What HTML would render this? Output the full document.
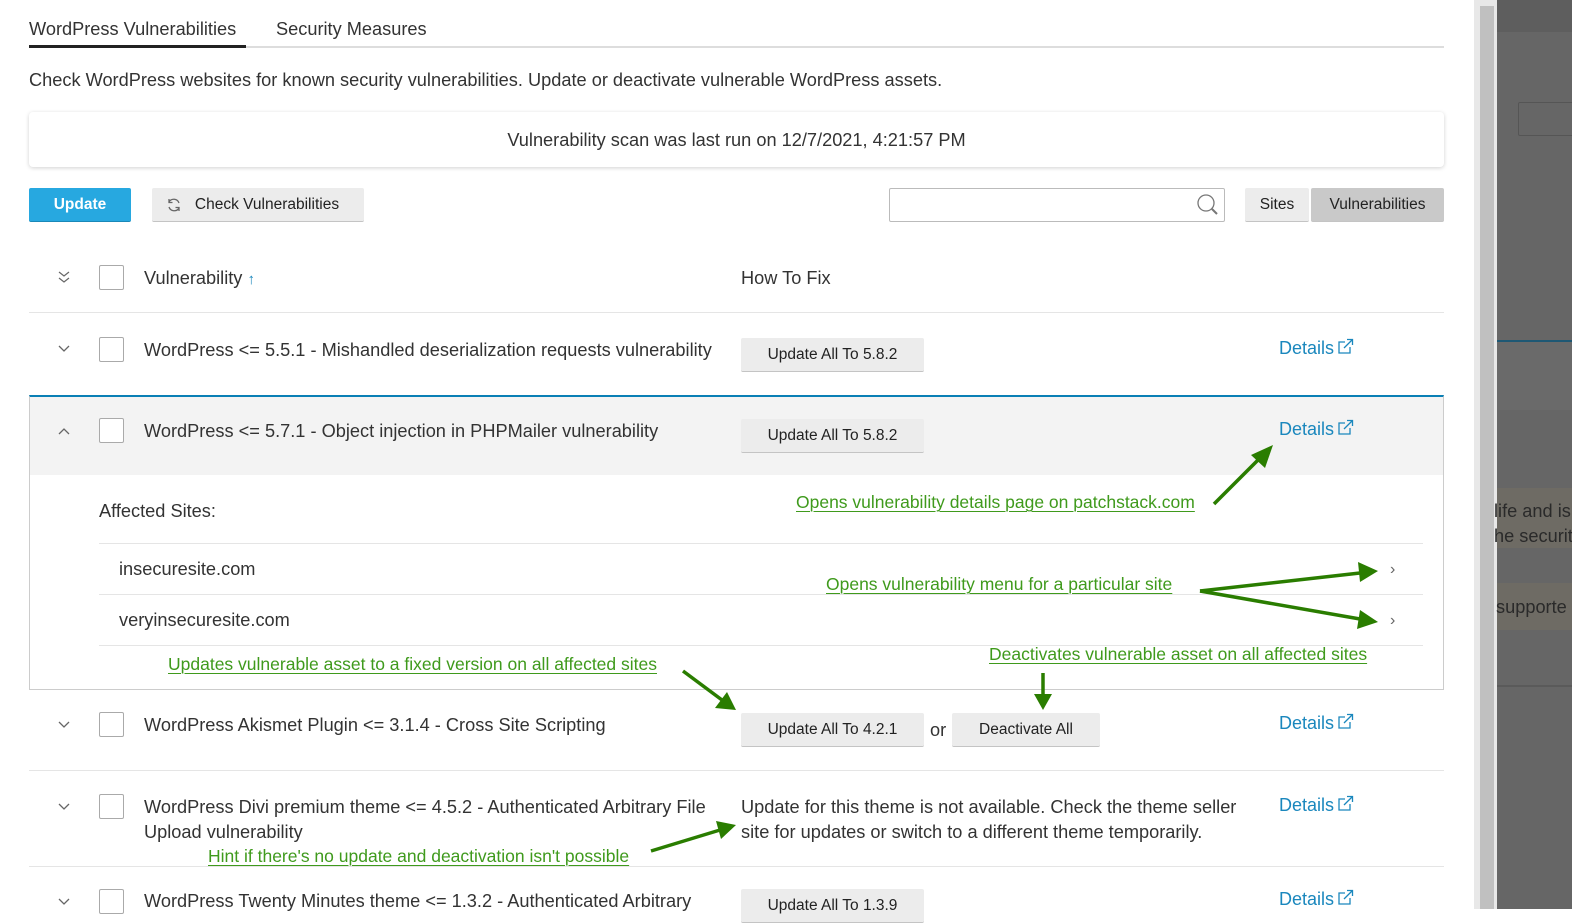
<!DOCTYPE html>
<html><head><meta charset="utf-8"><style>
*{box-sizing:border-box;margin:0;padding:0}
body{width:1572px;height:909px;overflow:hidden;background:#fff;font-family:"Liberation Sans",sans-serif;color:#333;position:relative}
.t{position:absolute;white-space:nowrap;font-size:18.2px;line-height:24px}
.b{position:absolute;background:#ececec;border-bottom:1px solid #c4c4c4;font-size:15.5px;text-align:center;color:#222;border-radius:2px}
.cb{position:absolute;width:25px;height:25px;border:1px solid #aaa;border-radius:2px;background:#fff}
.hl{position:absolute;height:1px;background:#e5e5e5}
.lnk{position:absolute;color:#1a87bd;font-size:18px;white-space:nowrap}
.lnk svg{vertical-align:-1px;margin-left:3px}
.g{position:absolute;color:#3f9a1c;font-size:17.5px;white-space:nowrap;text-decoration:underline;text-underline-offset:3px;text-decoration-thickness:1px}
</style></head><body>
<div class="t" style="left:29px;top:17px">WordPress Vulnerabilities</div>
<div class="t" style="left:276px;top:17px">Security Measures</div>
<div style="position:absolute;left:29px;top:46px;width:1415px;height:2px;background:#ddd"></div>
<div style="position:absolute;left:29px;top:45px;width:217px;height:3px;background:#222"></div>
<div class="t" style="left:29px;top:68px">Check WordPress websites for known security vulnerabilities. Update or deactivate vulnerable WordPress assets.</div>
<div style="position:absolute;left:29px;top:112px;width:1415px;height:55px;border-radius:4px;box-shadow:0 1px 4px rgba(0,0,0,.18);background:#fff"></div>
<div class="t" style="left:0;width:1473px;text-align:center;top:128px">Vulnerability scan was last run on 12/7/2021, 4:21:57 PM</div>
<div class="b" style="left:29px;top:188px;width:102px;height:34px;background:#27a8e0;color:#fff;font-weight:bold;line-height:34px;border-bottom:1px solid #1a88b8">Update</div>
<div class="b" style="left:152px;top:188px;width:212px;height:34px;line-height:34px;padding-left:18px"><svg style="position:absolute;left:14px;top:9px" width="16" height="16"><path d="M13 6A5.5 5.5 0 0 0 3 5M3 10a5.5 5.5 0 0 0 10 1" fill="none" stroke="#666" stroke-width="1.3"/><path d="M3 2v3.5h3.5M13 14v-3.5H9.5" fill="none" stroke="#666" stroke-width="1.3"/></svg>Check Vulnerabilities</div>
<div style="position:absolute;left:889px;top:188px;width:336px;height:34px;border:1px solid #bbb;border-radius:2px"></div>
<svg style="position:absolute;left:1196px;top:193px" width="26" height="26"><circle cx="10" cy="10" r="8" fill="none" stroke="#777" stroke-width="1.3"/><path d="M16 16 L21 21" stroke="#777" stroke-width="2"/></svg>
<div class="b" style="left:1245px;top:188px;width:64px;height:34px;line-height:34px">Sites</div>
<div class="b" style="left:1311px;top:188px;width:133px;height:34px;line-height:34px;background:#c9c9c9">Vulnerabilities</div>
<svg style="position:absolute;left:57px;top:270px" width="14" height="14"><path d="M2 2l5 4 5-4M2 8l5 4 5-4" fill="none" stroke="#666" stroke-width="1.2"/></svg>
<div class="cb" style="left:99px;top:265px"></div>
<div class="t" style="left:144px;top:266px">Vulnerability <span style="color:#1a87bd;font-size:15px">&#x2191;</span></div>
<div class="t" style="left:741px;top:266px">How To Fix</div>
<div class="hl" style="left:29px;top:312px;width:1415px"></div>
<svg style="position:absolute;left:57px;top:344px" width="14" height="10"><path d="M2 2l5 5 5-5" fill="none" stroke="#666" stroke-width="1.3"/></svg>
<div class="cb" style="left:99px;top:337px"></div>
<div class="t" style="left:144px;top:338px">WordPress &lt;= 5.5.1 - Mishandled deserialization requests vulnerability</div>
<div class="b" style="left:741px;top:338px;width:183px;height:34px;line-height:34px">Update All To 5.8.2</div>
<div class="lnk" style="left:1279px;top:338px">Details<svg width="17" height="17"><path d="M13 9v6H2V4h6" fill="none" stroke="#1a87bd" stroke-width="1.3"/><path d="M7 10L15 2M10 1.5h5.5V7" fill="none" stroke="#1a87bd" stroke-width="1.3"/></svg></div>
<div style="position:absolute;left:29px;top:395px;width:1415px;height:295px;border:1px solid #ccc;border-top:2px solid #0a7fb5"></div>
<div style="position:absolute;left:30px;top:397px;width:1413px;height:78px;background:#f3f3f3"></div>
<svg style="position:absolute;left:57px;top:426px" width="14" height="10"><path d="M2 8l5-5 5 5" fill="none" stroke="#666" stroke-width="1.3"/></svg>
<div class="cb" style="left:99px;top:418px"></div>
<div class="t" style="left:144px;top:419px">WordPress &lt;= 5.7.1 - Object injection in PHPMailer vulnerability</div>
<div class="b" style="left:741px;top:419px;width:183px;height:34px;line-height:34px">Update All To 5.8.2</div>
<div class="lnk" style="left:1279px;top:419px">Details<svg width="17" height="17"><path d="M13 9v6H2V4h6" fill="none" stroke="#1a87bd" stroke-width="1.3"/><path d="M7 10L15 2M10 1.5h5.5V7" fill="none" stroke="#1a87bd" stroke-width="1.3"/></svg></div>
<div class="t" style="left:99px;top:499px">Affected Sites:</div>
<div class="hl" style="left:99px;top:543px;width:1324px"></div>
<div class="t" style="left:119px;top:557px">insecuresite.com</div>
<div class="t" style="left:1390px;top:558px;color:#666;font-size:16px">&#x203A;</div>
<div class="hl" style="left:99px;top:594px;width:1324px"></div>
<div class="t" style="left:119px;top:608px">veryinsecuresite.com</div>
<div class="t" style="left:1390px;top:609px;color:#666;font-size:16px">&#x203A;</div>
<div class="hl" style="left:99px;top:645px;width:1324px"></div>
<div class="g" style="left:796px;top:492px">Opens vulnerability details page on patchstack.com</div>
<div class="g" style="left:826px;top:574px">Opens vulnerability menu for a particular site</div>
<div class="g" style="left:168px;top:654px">Updates vulnerable asset to a fixed version on all affected sites</div>
<div class="g" style="left:989px;top:644px">Deactivates vulnerable asset on all affected sites</div>
<svg style="position:absolute;left:57px;top:720px" width="14" height="10"><path d="M2 2l5 5 5-5" fill="none" stroke="#666" stroke-width="1.3"/></svg>
<div class="cb" style="left:99px;top:712px"></div>
<div class="t" style="left:144px;top:713px">WordPress Akismet Plugin &lt;= 3.1.4 - Cross Site Scripting</div>
<div class="b" style="left:741px;top:713px;width:183px;height:34px;line-height:34px">Update All To 4.2.1</div>
<div class="t" style="left:930px;top:718px">or</div>
<div class="b" style="left:952px;top:713px;width:148px;height:34px;line-height:34px">Deactivate All</div>
<div class="lnk" style="left:1279px;top:713px">Details<svg width="17" height="17"><path d="M13 9v6H2V4h6" fill="none" stroke="#1a87bd" stroke-width="1.3"/><path d="M7 10L15 2M10 1.5h5.5V7" fill="none" stroke="#1a87bd" stroke-width="1.3"/></svg></div>
<div class="hl" style="left:29px;top:770px;width:1415px"></div>
<svg style="position:absolute;left:57px;top:802px" width="14" height="10"><path d="M2 2l5 5 5-5" fill="none" stroke="#666" stroke-width="1.3"/></svg>
<div class="cb" style="left:99px;top:794px"></div>
<div class="t" style="left:144px;top:795px;line-height:25px">WordPress Divi premium theme &lt;= 4.5.2 - Authenticated Arbitrary File<br>Upload vulnerability</div>
<div class="t" style="left:741px;top:795px;line-height:25px">Update for this theme is not available. Check the theme seller<br>site for updates or switch to a different theme temporarily.</div>
<div class="lnk" style="left:1279px;top:795px">Details<svg width="17" height="17"><path d="M13 9v6H2V4h6" fill="none" stroke="#1a87bd" stroke-width="1.3"/><path d="M7 10L15 2M10 1.5h5.5V7" fill="none" stroke="#1a87bd" stroke-width="1.3"/></svg></div>
<div class="hl" style="left:29px;top:866px;width:1415px"></div>
<div class="g" style="left:208px;top:846px">Hint if there's no update and deactivation isn't possible</div>
<svg style="position:absolute;left:57px;top:897px" width="14" height="10"><path d="M2 2l5 5 5-5" fill="none" stroke="#666" stroke-width="1.3"/></svg>
<div class="cb" style="left:99px;top:889px"></div>
<div class="t" style="left:144px;top:889px">WordPress Twenty Minutes theme &lt;= 1.3.2 - Authenticated Arbitrary</div>
<div class="b" style="left:741px;top:889px;width:183px;height:34px;line-height:34px">Update All To 1.3.9</div>
<div class="lnk" style="left:1279px;top:889px">Details<svg width="17" height="17"><path d="M13 9v6H2V4h6" fill="none" stroke="#1a87bd" stroke-width="1.3"/><path d="M7 10L15 2M10 1.5h5.5V7" fill="none" stroke="#1a87bd" stroke-width="1.3"/></svg></div>
<svg style="position:absolute;left:0;top:0" width="1572" height="909">
<g stroke="#2a7d00" stroke-width="3.5" fill="#2a7d00">
<line x1="1214" y1="504" x2="1260" y2="458"/><polygon points="1273,445 1265,468 1251,455" stroke="none"/>
<line x1="1200" y1="591" x2="1360" y2="573"/><polygon points="1378,571 1358,562 1360,582" stroke="none"/>
<line x1="1200" y1="591" x2="1360" y2="619"/><polygon points="1378,622 1360,610 1357,629" stroke="none"/>
<line x1="683" y1="671" x2="722" y2="700"/><polygon points="736,710 715,708 727,692" stroke="none"/>
<line x1="1043" y1="673" x2="1043" y2="696"/><polygon points="1043,710 1034,694 1052,694" stroke="none"/>
<line x1="651" y1="851" x2="720" y2="830"/><polygon points="736,825 716,821 721,839" stroke="none"/>
</g></svg>
<div style="position:absolute;left:1474px;top:0;width:23px;height:909px;background:#e8e8e8"></div>
<div style="position:absolute;left:1480px;top:6px;width:14px;height:903px;background:#c0c0c0"></div>
<div style="position:absolute;left:1497px;top:0;width:75px;height:909px;background:#666"></div>
<div style="position:absolute;left:1497px;top:0;width:75px;height:32px;background:#5e5e5e"></div>
<div style="position:absolute;left:1518px;top:102px;width:60px;height:34px;border:1px solid #555;border-radius:2px"></div>
<div style="position:absolute;left:1497px;top:340px;width:75px;height:2px;background:#1e5874"></div>
<div style="position:absolute;left:1497px;top:342px;width:75px;height:68px;background:#6a6a6a"></div>
<div style="position:absolute;left:1497px;top:488px;width:75px;height:60px;background:#6e6b64"></div>
<div class="t" style="left:1494px;top:499px;color:#2a2a2a;line-height:25px">life and is<br>he securit</div>
<div style="position:absolute;left:1497px;top:583px;width:75px;height:47px;background:#6e6b64"></div>
<div class="t" style="left:1496px;top:595px;color:#2a2a2a">supporte</div>
<div style="position:absolute;left:1497px;top:685px;width:75px;height:2px;background:#5a5a5a"></div>
</body></html>
